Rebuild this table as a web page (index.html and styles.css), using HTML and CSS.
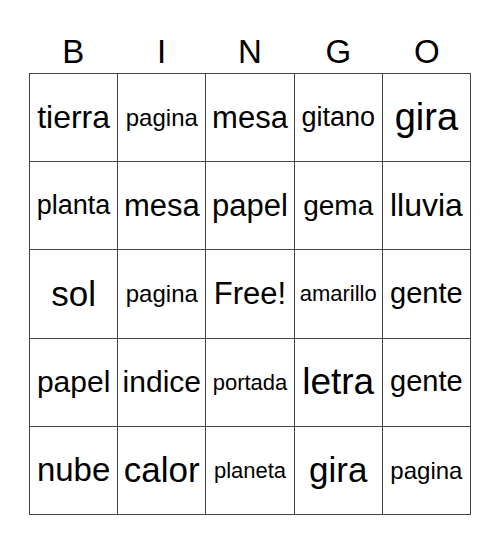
FILE: index.html
```html
<!DOCTYPE html>
<html>
<head>
<meta charset="utf-8">
<link rel="stylesheet" href="styles.css">
</head>
<body>
<div class="card">
  <div class="head">
    <span>B</span><span>I</span><span>N</span><span>G</span><span>O</span>
  </div>
  <div class="grid">
    <div class="cell s32">tierra</div>
    <div class="cell s24">pagina</div>
    <div class="cell s31">mesa</div>
    <div class="cell s27">gitano</div>
    <div class="cell s38">gira</div>

    <div class="cell s27">planta</div>
    <div class="cell s31">mesa</div>
    <div class="cell s31">papel</div>
    <div class="cell s28">gema</div>
    <div class="cell s32">lluvia</div>

    <div class="cell s35">sol</div>
    <div class="cell s24">pagina</div>
    <div class="cell s31">Free!</div>
    <div class="cell s22">amarillo</div>
    <div class="cell s29">gente</div>

    <div class="cell s30">papel</div>
    <div class="cell s30">indice</div>
    <div class="cell s22">portada</div>
    <div class="cell s37">letra</div>
    <div class="cell s29">gente</div>

    <div class="cell s33">nube</div>
    <div class="cell s35">calor</div>
    <div class="cell s22">planeta</div>
    <div class="cell s35">gira</div>
    <div class="cell s24">pagina</div>
  </div>
</div>
</body>
</html>
```

FILE: styles.css
```css
html, body {
  margin: 0;
  padding: 0;
  background: #fff;
}
body {
  font-family: "Liberation Sans", Arial, sans-serif;
  color: #000;
}
.card {
  width: 442px;
  margin-left: 29px;
}
.head {
  height: 73px;
  box-sizing: border-box;
  display: grid;
  grid-template-columns: repeat(5, 1fr);
  align-items: end;
  padding-bottom: 5px;
  font-size: 33px;
  line-height: 1;
  text-align: center;
}
.grid {
  display: grid;
  grid-template-columns: repeat(5, 1fr);
  grid-auto-rows: 88.2px;
  border-left: 1px solid #444;
  border-top: 1px solid #444;
}
.cell {
  border-right: 1px solid #444;
  border-bottom: 1px solid #444;
  display: flex;
  align-items: center;
  justify-content: center;
  white-space: nowrap;
  line-height: 1.15;
}
.s22 { font-size: 22px; }
.s24 { font-size: 24px; }
.s27 { font-size: 27px; }
.s28 { font-size: 28px; }
.s29 { font-size: 29px; }
.s30 { font-size: 30px; }
.s31 { font-size: 31px; }
.s32 { font-size: 32px; }
.s33 { font-size: 33px; }
.s35 { font-size: 35px; }
.s37 { font-size: 37px; }
.s38 { font-size: 38px; }
```
